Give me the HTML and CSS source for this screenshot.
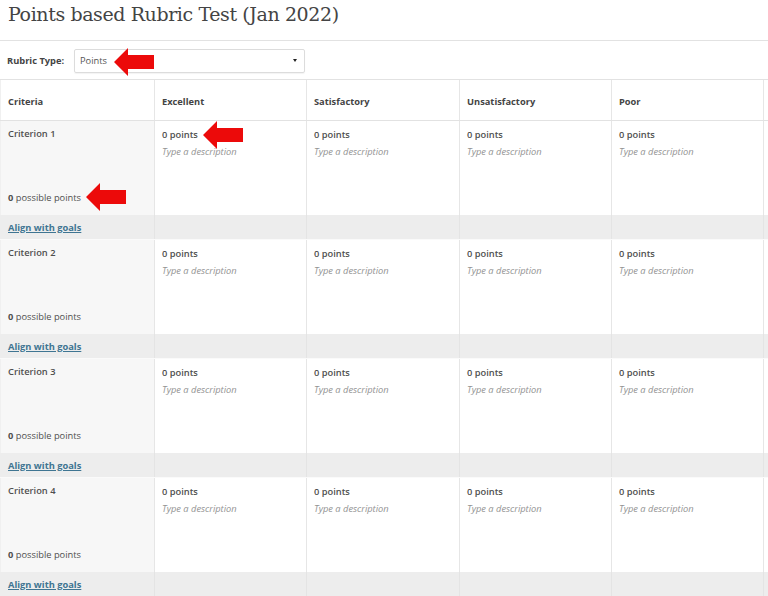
FILE: index.html
```html
<!DOCTYPE html>
<html>
<head>
<meta charset="utf-8">
<link rel="stylesheet" href="styles.css">
</head>
<body>
<div class="page">
  <h1 class="title">Points based Rubric Test (Jan 2022)</h1>
  <div class="toolbar">
    <label class="tb-label">Rubric Type:</label>
    <div class="select">
      <span class="select-value">Points</span>
      <span class="caret"></span>
      <svg class="arrow arrow-select" viewBox="0 0 40 28"><polygon points="0,14 14,0 14,7 40,7 40,21 14,21 14,28"/></svg>
    </div>
  </div>
  <div class="rubric">
    <div class="row head">
      <div class="cell crit">Criteria</div>
      <div class="cell">Excellent</div>
      <div class="cell">Satisfactory</div>
      <div class="cell">Unsatisfactory</div>
      <div class="cell">Poor</div>
      <div class="cell"></div>
    </div>

    <div class="row body">
      <div class="cell crit">
        <span class="crit-name">Criterion 1</span>
        <span class="possible"><b>0</b> possible points
          <svg class="arrow arrow-possible" viewBox="0 0 40 28"><polygon points="0,14 14,0 14,7 40,7 40,21 14,21 14,28"/></svg>
        </span>
      </div>
      <div class="cell level"><span class="pts">0 points
        <svg class="arrow arrow-points" viewBox="0 0 40 28"><polygon points="0,14 14,0 14,7 40,7 40,21 14,21 14,28"/></svg></span><span class="desc">Type a description</span></div>
      <div class="cell level"><span class="pts">0 points</span><span class="desc">Type a description</span></div>
      <div class="cell level"><span class="pts">0 points</span><span class="desc">Type a description</span></div>
      <div class="cell level"><span class="pts">0 points</span><span class="desc">Type a description</span></div>
      <div class="cell level"></div>
    </div>
    <div class="row align">
      <div class="cell crit"><a class="goals" href="#">Align with goals</a></div>
      <div class="cell"></div><div class="cell"></div><div class="cell"></div><div class="cell"></div><div class="cell"></div>
    </div>

    <div class="row body">
      <div class="cell crit">
        <span class="crit-name">Criterion 2</span>
        <span class="possible"><b>0</b> possible points</span>
      </div>
      <div class="cell level"><span class="pts">0 points</span><span class="desc">Type a description</span></div>
      <div class="cell level"><span class="pts">0 points</span><span class="desc">Type a description</span></div>
      <div class="cell level"><span class="pts">0 points</span><span class="desc">Type a description</span></div>
      <div class="cell level"><span class="pts">0 points</span><span class="desc">Type a description</span></div>
      <div class="cell level"></div>
    </div>
    <div class="row align">
      <div class="cell crit"><a class="goals" href="#">Align with goals</a></div>
      <div class="cell"></div><div class="cell"></div><div class="cell"></div><div class="cell"></div><div class="cell"></div>
    </div>

    <div class="row body">
      <div class="cell crit">
        <span class="crit-name">Criterion 3</span>
        <span class="possible"><b>0</b> possible points</span>
      </div>
      <div class="cell level"><span class="pts">0 points</span><span class="desc">Type a description</span></div>
      <div class="cell level"><span class="pts">0 points</span><span class="desc">Type a description</span></div>
      <div class="cell level"><span class="pts">0 points</span><span class="desc">Type a description</span></div>
      <div class="cell level"><span class="pts">0 points</span><span class="desc">Type a description</span></div>
      <div class="cell level"></div>
    </div>
    <div class="row align">
      <div class="cell crit"><a class="goals" href="#">Align with goals</a></div>
      <div class="cell"></div><div class="cell"></div><div class="cell"></div><div class="cell"></div><div class="cell"></div>
    </div>

    <div class="row body">
      <div class="cell crit">
        <span class="crit-name">Criterion 4</span>
        <span class="possible"><b>0</b> possible points</span>
      </div>
      <div class="cell level"><span class="pts">0 points</span><span class="desc">Type a description</span></div>
      <div class="cell level"><span class="pts">0 points</span><span class="desc">Type a description</span></div>
      <div class="cell level"><span class="pts">0 points</span><span class="desc">Type a description</span></div>
      <div class="cell level"><span class="pts">0 points</span><span class="desc">Type a description</span></div>
      <div class="cell level"></div>
    </div>
    <div class="row align">
      <div class="cell crit"><a class="goals" href="#">Align with goals</a></div>
      <div class="cell"></div><div class="cell"></div><div class="cell"></div><div class="cell"></div><div class="cell"></div>
    </div>
  </div>
</div>
</body>
</html>
```
FILE: styles.css
```css
html, body {
  margin: 0;
  padding: 0;
  background: #fff;
}
body {
  font-family: "Open Sans", "Liberation Sans", sans-serif;
  font-size: 9.3px;
  color: #4f4f4f;
}
.page {
  width: 768px;
  height: 596px;
  overflow: hidden;
}
.title {
  margin: 0;
  height: 40px;
  padding: 0 0 0 8px;
  font-family: "DejaVu Serif", "Liberation Serif", serif;
  font-weight: normal;
  font-size: 19px;
  letter-spacing: -0.4px;
  line-height: 29px;
  color: #444;
  border-bottom: 1px solid #e2e2e2;
}
.toolbar {
  height: 38px;
  display: flex;
  align-items: center;
  padding-left: 7px;
  border-bottom: 1px solid #e2e2e2;
}
.tb-label {
  font-weight: 700;
  color: #444;
  width: 67px;
}
.select {
  position: relative;
  width: 224px;
  height: 22px;
  border: 1px solid #dcdcdc;
  border-radius: 2px;
  box-shadow: 0 1px 1px rgba(0,0,0,0.05);
  display: flex;
  align-items: center;
  padding-left: 5px;
  box-sizing: content-box;
  margin-top: 1px;
}
.select-value {
  flex: 1;
  color: #555;
}
.caret {
  width: 0;
  height: 0;
  border-left: 2px solid transparent;
  border-right: 2px solid transparent;
  border-top: 3px solid #222;
  margin-right: 7px;
}
.arrow {
  position: absolute;
  width: 40px;
  height: 28px;
  fill: #ec0a0a;
}
.arrow-select {
  left: 39px;
  top: -2px;
}
.rubric {
  width: 768px;
}
.row {
  display: grid;
  grid-template-columns: 154px 152px 153px 152px 152px 152px;
}
.cell {
  border-left: 1px solid #e6e6e6;
  padding: 0 7px;
  box-sizing: border-box;
}
.cell.crit {
  border-left: 1px solid #f0f0f0;
}
.head {
  height: 40px;
  border-bottom: 1px solid #e2e2e2;
}
.head .cell {
  display: flex;
  align-items: center;
  font-weight: 700;
  color: #444;
  padding-top: 2px;
}
.body {
  height: 94px;
}
.body .crit {
  background: #f7f7f7;
  display: flex;
  flex-direction: column;
  justify-content: space-between;
  padding-top: 6px;
  padding-bottom: 11px;
}
.crit-name {
  font-weight: 600;
}
.possible {
  position: relative;
}
.possible b {
  font-weight: 700;
}
.arrow-possible {
  left: 78px;
  top: -8px;
}
.level {
  background: #fff;
  display: flex;
  flex-direction: column;
  padding-top: 6px;
}
.pts {
  position: relative;
  font-weight: 600;
  line-height: 15px;
}
.arrow-points {
  left: 41px;
  top: -6px;
}
.desc {
  font-style: italic;
  color: #929292;
  line-height: 20px;
}
.align {
  height: 24px;
  border-bottom: 1px solid #fafafa;
}
.align .cell {
  background: #ededed;
  border-left-color: #e4e4e4;
  display: flex;
  align-items: center;
}
.align .cell.crit {
  border-left-color: #ededed;
}
.goals {
  font-weight: 700;
  color: #3f7592;
  text-decoration: underline;
}
```
